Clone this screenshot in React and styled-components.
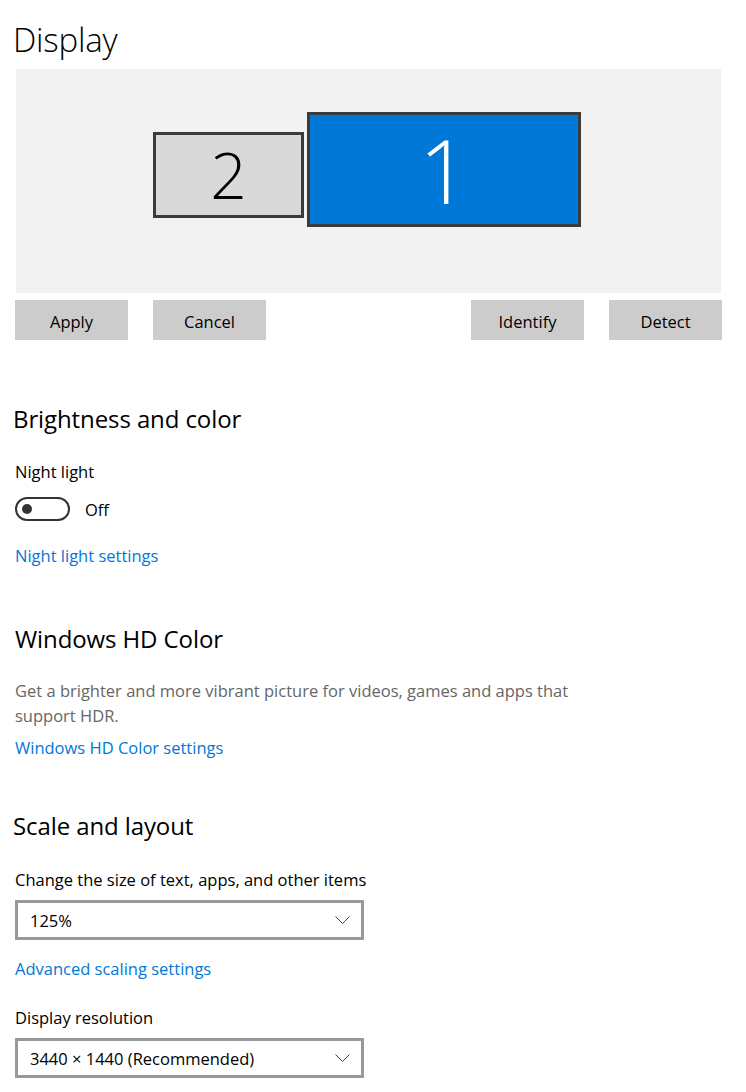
import React from 'react';
import styled, { createGlobalStyle } from 'styled-components';

const Global = createGlobalStyle`
  html, body {
    margin: 0;
    padding: 0;
    background: #ffffff;
  }
  body {
    font-family: "Open Sans", "Noto Sans", "Liberation Sans", sans-serif;
    color: #000;
  }
`

const Page = styled.div`
  width: 746px;
  padding: 0 0 20px 15px;
  box-sizing: border-box;
`

const Title = styled.h1`
  margin: 0;
  padding-top: 16px;
  margin-left: -2px;
  height: 53px;
  font-size: 33px;
  line-height: 48px;
  font-weight: 300;
  letter-spacing: -0.2px;
`

const Preview = styled.div`
  position: relative;
  margin-left: 1px;
  width: 705px;
  height: 224px;
  background: #f2f2f2;
`

// monitors sit on the arrangement canvas at their own coordinates
const Monitor = styled.div`
  position: absolute;
  left: ${(p) => p.x}px;
  top: ${(p) => p.y}px;
  width: ${(p) => p.w}px;
  height: ${(p) => p.h}px;
  box-sizing: border-box;
  border: 3px solid #3b3b3b;
  background: ${(p) => (p.active ? '#0078d7' : '#d9d9d9')};
  color: ${(p) => (p.active ? '#ffffff' : '#000000')};
  display: flex;
  align-items: center;
  justify-content: center;
  font-weight: 300;
  font-size: ${(p) => p.size}px;
  line-height: 1;
`

const ButtonRow = styled.div`
  margin-top: 7px;
  width: 707px;
  display: flex;
  justify-content: space-between;
`

const Group = styled.div`
  display: flex;
  gap: 25px;
`

const Button = styled.button`
  width: 113px;
  height: 40px;
  border: none;
  background: #cccccc;
  font-family: inherit;
  font-size: 16.5px;
  color: #000;
  padding: 2px 0 0;
`

const Heading = styled.h2`
  margin: ${(p) => p.top}px 0 0 ${(p) => (p.shift ? -2 : 0)}px;
  font-size: 24px;
  line-height: 32px;
  font-weight: 400;
  letter-spacing: -0.1px;
`

const Label = styled.div`
  margin-top: ${(p) => p.top}px;
  font-size: 16.5px;
  line-height: 24px;
`

const ToggleRow = styled.div`
  margin-top: 13px;
  display: flex;
  align-items: center;
  gap: 15px;
  font-size: 16.5px;
`

const Track = styled.div`
  width: 55px;
  height: 24px;
  box-sizing: border-box;
  border: 2px solid #333;
  border-radius: 12px;
  display: flex;
  align-items: center;
  padding-left: 5px;
`

const Thumb = styled.div`
  width: 10px;
  height: 10px;
  border-radius: 50%;
  background: #333;
`

const Link = styled.a`
  display: block;
  margin-top: ${(p) => p.top}px;
  font-size: 16.5px;
  line-height: 24px;
  color: #0078d7;
  text-decoration: none;
`

const Desc = styled.p`
  margin: 23px 0 0;
  max-width: 575px;
  font-size: 16.5px;
  line-height: 25px;
  color: #666666;
`

const Select = styled.div`
  margin-top: 8px;
  width: 349px;
  height: 40px;
  box-sizing: border-box;
  border: 3px solid #999999;
  display: flex;
  align-items: center;
  justify-content: space-between;
  padding: 0 11px 0 12px;
  font-size: 16.5px;
`

const Chevron = () => (
  <svg width="15" height="8" viewBox="0 0 15 8">
    <path d="M0.5 0.5 L7.5 7.5 L14.5 0.5" fill="none" stroke="#444" strokeWidth="1" />
  </svg>
)

const App = () => {
  return (
    <Page>
      <Global />
      <Title>Display</Title>
      <Preview>
        <Monitor x={137} y={63} w={151} h={86} size={64}>2</Monitor>
        <Monitor x={291} y={43} w={274} h={115} size={88} active>1</Monitor>
      </Preview>
      <ButtonRow>
        <Group>
          <Button>Apply</Button>
          <Button>Cancel</Button>
        </Group>
        <Group>
          <Button>Identify</Button>
          <Button>Detect</Button>
        </Group>
      </ButtonRow>

      <Heading top={63} shift>Brightness and color</Heading>
      <Label top={25}>Night light</Label>
      <ToggleRow>
        <Track><Thumb /></Track>
        <span>Off</span>
      </ToggleRow>
      <Link top={23} href="#">Night light settings</Link>

      <Heading top={55}>Windows HD Color</Heading>
      <Desc>Get a brighter and more vibrant picture for videos, games and apps that support HDR.</Desc>
      <Link top={8} href="#">Windows HD Color settings</Link>

      <Heading top={50} shift>Scale and layout</Heading>
      <Label top={26}>Change the size of text, apps, and other items</Label>
      <Select>
        <span>125%</span>
        <Chevron />
      </Select>
      <Link top={17} href="#">Advanced scaling settings</Link>
      <Label top={25}>Display resolution</Label>
      <Select>
        <span>3440 × 1440 (Recommended)</span>
        <Chevron />
      </Select>
    </Page>
  );
}

export default App;
